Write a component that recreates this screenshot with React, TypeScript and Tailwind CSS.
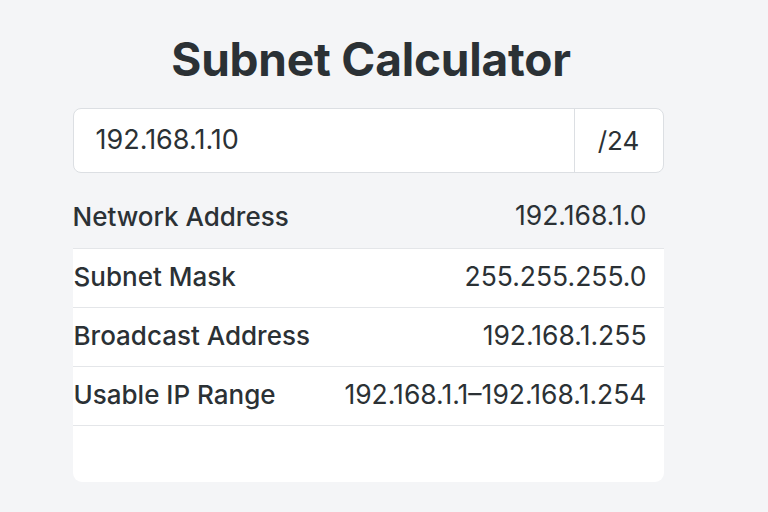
const rows = [
    { label: 'Subnet Mask', value: '255.255.255.0' },
    { label: 'Broadcast Address', value: '192.168.1.255' },
    { label: 'Usable IP Range', value: '192.168.1.1–192.168.1.254' },
]

const App = () => {
    return (
        <div className="min-h-screen bg-[#f4f5f7] text-[#2b3135] font-['Inter',sans-serif] flex flex-col items-center pt-[27px] pr-[32px]">
            <h1 className="text-[46px] font-bold leading-[64px] tracking-[-0.2px] ml-[6px]">Subnet Calculator</h1>
            <div className="w-[591px] mt-[17px] flex flex-col">
                <div className="flex h-[65px] bg-white border border-[#dcdfe3] rounded-[8px] overflow-hidden">
                    <div className="flex-1 flex items-center pl-[22px] text-[27px]">192.168.1.10</div>
                    <div className="w-[89px] border-l border-[#dcdfe3] flex items-center justify-center text-[26px]">/24</div>
                </div>
                <div className="flex items-center justify-between h-[76px] pt-[13px] pb-[2px] pr-[17px] border-b border-[#e4e6e9]">
                    <span className="text-[26px] font-medium">Network Address</span>
                    <span className="text-[26.5px]">192.168.1.0</span>
                </div>
                <div className="bg-white rounded-b-[9px] flex flex-col">
                    {rows.map((row) => (
                        <div key={row.label} className="flex items-center justify-between h-[59px] pl-[1px] pr-[17px] pb-[3px] border-b border-[#e4e6e9]">
                            <span className="text-[26px] font-medium">{row.label}</span>
                            <span className="text-[26.5px]">{row.value}</span>
                        </div>
                    ))}
                    <div className="h-[56px]"></div>
                </div>
            </div>
        </div>
    )
}

export default App
